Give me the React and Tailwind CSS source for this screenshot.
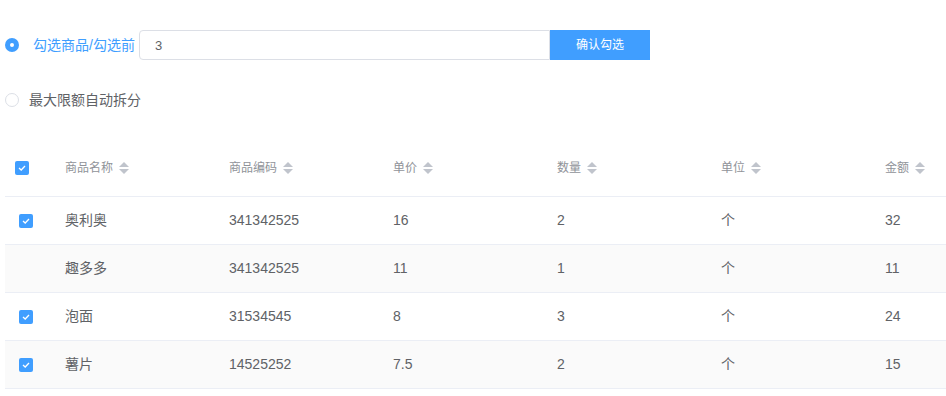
import React, { useState } from 'react';

const rows = [
  { name: '奥利奥', code: '341342525', price: '16', qty: '2', unit: '个', amount: '32', checked: true },
  { name: '趣多多', code: '341342525', price: '11', qty: '1', unit: '个', amount: '11', checked: false },
  { name: '泡面', code: '31534545', price: '8', qty: '3', unit: '个', amount: '24', checked: true },
  { name: '薯片', code: '14525252', price: '7.5', qty: '2', unit: '个', amount: '15', checked: true },
];

const columns = ['商品名称', '商品编码', '单价', '数量', '单位', '金额'];

const SortCaret = () => (
  <svg width="10" height="12" viewBox="0 0 10 12" className="ml-[6px] shrink-0">
    <polygon points="0,5 5,0 10,5" fill="#c0c4cc" />
    <polygon points="0,7 10,7 5,12" fill="#c0c4cc" />
  </svg>
);

const Checkbox = ({ checked }) =>
  checked ? (
    <span className="flex h-[14px] w-[14px] items-center justify-center rounded-[2px] bg-[#409eff]">
      <svg width="8" height="6" viewBox="0 0 8 6">
        <path d="M1 3 L3.2 5 L7 1" stroke="#fff" strokeWidth="1.3" fill="none" />
      </svg>
    </span>
  ) : null;

const Radio = ({ checked }) =>
  checked ? (
    <span className="flex h-[14px] w-[14px] items-center justify-center rounded-full bg-[#409eff]">
      <span className="h-[4px] w-[4px] rounded-full bg-white" />
    </span>
  ) : (
    <span className="h-[14px] w-[14px] rounded-full border border-[#dcdfe6] bg-white" />
  );

const App = () => {
  const [count, setCount] = useState('3');

  return (
    <div
      className="h-[396px] w-[946px] overflow-hidden bg-white pl-[5px] pt-[30px]"
      style={{ fontFamily: '"Liberation Sans", "Noto Sans CJK SC", sans-serif' }}
    >
      <div className="flex h-[30px] items-center">
        <Radio checked />
        <span className="ml-[14px] text-[14px] text-[#409eff]">勾选商品/勾选前</span>
        <input
          value={count}
          onChange={(e) => setCount(e.target.value)}
          className="ml-[4px] h-[30px] w-[411px] rounded-l-[4px] border border-[#dcdfe6] px-[15px] text-[13px] text-[#606266] outline-none"
        />
        <button className="h-[30px] w-[100px] bg-[#409eff] text-[12px] text-white">确认勾选</button>
      </div>

      <div className="mt-[30px] flex h-[20px] items-center">
        <Radio />
        <span className="ml-[10px] text-[14px] text-[#606266]">最大限额自动拆分</span>
      </div>

      <div className="mt-[30px] w-[941px] overflow-hidden">
        <div className="grid h-[57px] grid-cols-[50px_repeat(6,164px)] items-center border-b border-[#ebeef5]">
          <div className="pl-[10px]">
            <Checkbox checked />
          </div>
          {columns.map((c) => (
            <div key={c} className="flex items-center pl-[10px] text-[12px] text-[#909399]">
              {c}
              <SortCaret />
            </div>
          ))}
        </div>
        {rows.map((r, i) => (
          <div
            key={r.name}
            className={`grid h-[48px] grid-cols-[50px_repeat(6,164px)] items-center border-b border-[#ebeef5] text-[14px] text-[#606266] ${
              i % 2 === 1 ? 'bg-[#fafafa]' : 'bg-white'
            }`}
          >
            <div className="pl-[14px]">
              <Checkbox checked={r.checked} />
            </div>
            <div className="pl-[10px]">{r.name}</div>
            <div className="pl-[10px]">{r.code}</div>
            <div className="pl-[10px]">{r.price}</div>
            <div className="pl-[10px]">{r.qty}</div>
            <div className="pl-[10px]">{r.unit}</div>
            <div className="pl-[10px]">{r.amount}</div>
          </div>
        ))}
      </div>
    </div>
  );
};

export default App;
